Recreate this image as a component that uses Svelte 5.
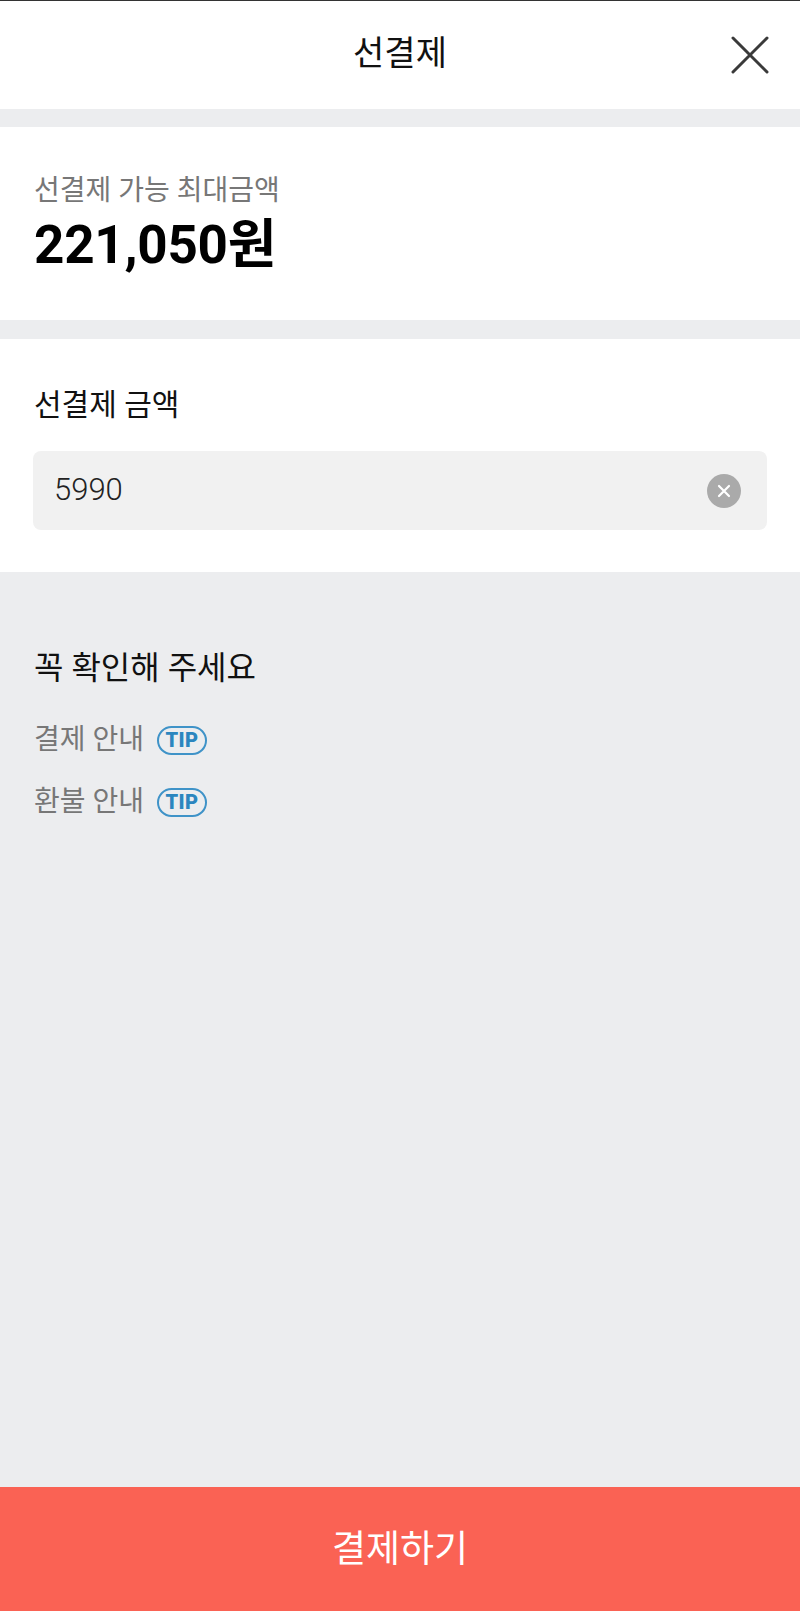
<script lang="ts">
  const notices = ['결제 안내', '환불 안내'];
  let amount = $state('5990');
</script>

<div class="page">
  <header class="top">
    <h1>선결제</h1>
    <button class="close" aria-label="닫기">
      <svg viewBox="0 0 38 38" width="38" height="38">
        <path d="M2 2 L36 36 M36 2 L2 36" />
      </svg>
    </button>
  </header>

  <section class="card limit">
    <p class="limit-label">선결제 가능 최대금액</p>
    <p class="limit-value">221,050원</p>
  </section>

  <section class="card entry">
    <p class="entry-label">선결제 금액</p>
    <div class="field">
      <input bind:value={amount} inputmode="numeric" />
      <button class="clear" aria-label="지우기" onclick={() => (amount = '')}>
        <svg viewBox="0 0 34 34" width="34" height="34">
          <circle cx="17" cy="17" r="17" fill="#aaaaaa" />
          <path d="M12 12 L22 22 M22 12 L12 22" />
        </svg>
      </button>
    </div>
  </section>

  <section class="notice">
    <h2>꼭 확인해 주세요</h2>
    <ul>
      {#each notices as item}
        <li>{item} <span class="tip">TIP</span></li>
      {/each}
    </ul>
  </section>

  <button class="pay">결제하기</button>
</div>

<style>
  :global(body) {
    margin: 0;
    background: #ecedef;
  }

  .page {
    display: flex;
    flex-direction: column;
    height: 1611px;
    background: #ecedef;
    font-family: Roboto, "Noto Sans CJK KR", sans-serif;
    color: #000;
  }

  p, h1, h2, ul {
    margin: 0;
    padding: 0;
    font-weight: 400;
  }

  button {
    border: 0;
    padding: 0;
    background: none;
    font-family: inherit;
  }

  .top {
    position: relative;
    display: flex;
    align-items: center;
    justify-content: center;
    height: 109px;
    padding-bottom: 5px;
    box-sizing: border-box;
    background: #fff;
    border-top: 1px solid #333;
  }

  .top h1 {
    font-size: 34px;
    line-height: 1;
    color: #111;
  }

  .close {
    position: absolute;
    right: 31px;
    top: 35px;
    display: flex;
  }

  .close path {
    fill: none;
    stroke: #3a3a3a;
    stroke-width: 3;
    stroke-linecap: round;
  }

  .card {
    background: #fff;
    padding-left: 34px;
    padding-right: 34px;
    box-sizing: border-box;
  }

  .limit {
    margin-top: 18px;
    height: 193px;
    padding-top: 44px;
  }

  .limit-label {
    font-size: 28px;
    line-height: 40px;
    color: #777;
  }

  .limit-value {
    margin-top: 2px;
    font-size: 53px;
    line-height: 64px;
    font-weight: 700;
    letter-spacing: -0.25px;
  }

  .entry {
    margin-top: 19px;
    height: 233px;
    padding-top: 46px;
  }

  .entry-label {
    font-size: 30px;
    line-height: 40px;
    color: #111;
  }

  .field {
    display: flex;
    align-items: center;
    margin: 26px -1px 0;
    height: 79px;
    padding: 0 26px 0 21px;
    background: #f1f1f1;
    border-radius: 8px;
  }

  .field input {
    flex: 1;
    min-width: 0;
    border: 0;
    padding: 0 0 2px;
    outline: 0;
    background: none;
    font-family: inherit;
    font-size: 31px;
    font-weight: 300;
    color: #222;
  }

  .clear {
    display: flex;
  }

  .clear path {
    fill: none;
    stroke: #fff;
    stroke-width: 2.2;
    stroke-linecap: round;
  }

  .notice {
    flex: 1;
    padding: 76px 34px 0;
  }

  .notice h2 {
    font-size: 32px;
    line-height: 40px;
    color: #111;
  }

  .notice ul {
    margin-top: 32px;
    list-style: none;
    display: flex;
    flex-direction: column;
    gap: 22px;
  }

  .notice li {
    display: flex;
    align-items: center;
    gap: 13px;
    font-size: 28px;
    line-height: 40px;
    color: #777;
  }

  .tip {
    display: flex;
    align-items: center;
    justify-content: center;
    box-sizing: border-box;
    width: 50px;
    height: 29px;
    border: 2px solid #3f93c8;
    border-radius: 15px;
    font-size: 20px;
    font-weight: 900;
    letter-spacing: 0.5px;
    line-height: 1;
    color: #2b86bf;
  }

  .pay {
    height: 124px;
    padding-bottom: 6px;
    background: #fa6254;
    color: #fff;
    font-size: 37px;
  }
</style>
